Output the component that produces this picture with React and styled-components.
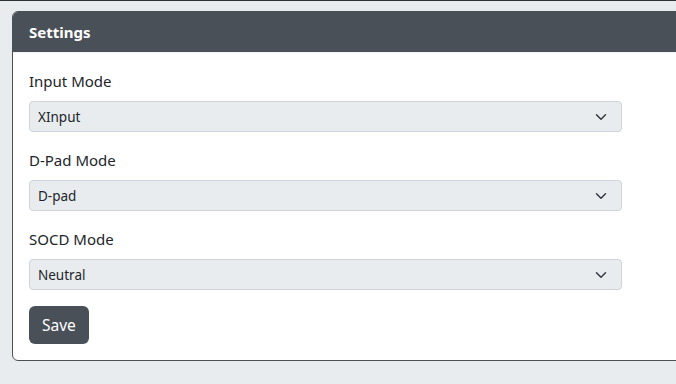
import React from "react";
import styled, { createGlobalStyle } from "styled-components";

const Global = createGlobalStyle`
  html, body { margin: 0; padding: 0; }
  body {
    background: #e9ecef;
    font-family: "Noto Sans", "Open Sans", sans-serif;
    color: #212529;
    overflow: hidden;
  }
  * { box-sizing: border-box; }
`;

const Page = styled.div`
  width: 676px;
  height: 384px;
  overflow: hidden;
  background: #e9ecef;
  border-top: 1px solid #2b3035;
`;

const Container = styled.div`
  padding: 10px 0 0 12px;
`;

const Card = styled.section`
  width: 720px;
  background: #fff;
  border: 1px solid #495057;
  border-radius: 6px;
  overflow: hidden;
`;

const CardHeader = styled.header`
  background: #495057;
  color: #fff;
  font-weight: 700;
  font-size: 15px;
  line-height: 24px;
  padding: 8px 16px;
  height: 41px;
  border-bottom: 1px solid #f1f3f5;
`;

const CardBody = styled.div`
  padding: 16px;
`;

const Form = styled.form`
  width: 593px;
  display: flex;
  flex-direction: column;
`;

const Field = styled.div`
  margin-bottom: 16px;
`;

const Label = styled.label`
  display: block;
  font-size: 15px;
  line-height: 24px;
  margin-bottom: 8px;
`;

const SelectWrap = styled.div`
  position: relative;
`;

const Select = styled.select`
  display: block;
  width: 100%;
  height: 31px;
  appearance: none;
  background: #e9ecef;
  border: 1px solid #ced4da;
  border-radius: 4px;
  padding: 0 36px 0 8px;
  font-family: inherit;
  font-size: 13.5px;
  color: #212529;
  outline: none;
`;

const Chevron = styled.svg`
  position: absolute;
  right: 13px;
  top: 9.5px;
  width: 16px;
  height: 12px;
  pointer-events: none;
`;

const SaveButton = styled.button`
  align-self: flex-start;
  height: 38px;
  padding: 0 13px;
  border: none;
  border-radius: 6px;
  background: #495057;
  color: #fff;
  font-family: inherit;
  font-size: 15.5px;
`;

const fields = [
  { label: "Input Mode", value: "XInput", options: ["XInput", "Nintendo Switch", "PS3", "Keyboard"] },
  { label: "D-Pad Mode", value: "D-pad", options: ["D-pad", "Left Analog", "Right Analog"] },
  { label: "SOCD Mode", value: "Neutral", options: ["Neutral", "Last Win", "Up Priority"] },
];

function ChevronIcon() {
  return (
    <Chevron viewBox="0 0 16 16" preserveAspectRatio="xMidYMid meet">
      <path d="m2 5 6 6 6-6" fill="none" stroke="#343a40" strokeWidth="2" strokeLinecap="round" strokeLinejoin="round" />
    </Chevron>
  );
}

export default function App() {
  return (
    <Page>
      <Global />
      <Container>
        <Card>
          <CardHeader>Settings</CardHeader>
          <CardBody>
            <Form onSubmit={(e) => e.preventDefault()}>
              {fields.map((f) => (
                <Field key={f.label}>
                  <Label>{f.label}</Label>
                  <SelectWrap>
                    <Select defaultValue={f.value}>
                      {f.options.map((o) => (
                        <option key={o} value={o}>{o}</option>
                      ))}
                    </Select>
                    <ChevronIcon />
                  </SelectWrap>
                </Field>
              ))}
              <SaveButton type="submit">Save</SaveButton>
            </Form>
          </CardBody>
        </Card>
      </Container>
    </Page>
  );
}
